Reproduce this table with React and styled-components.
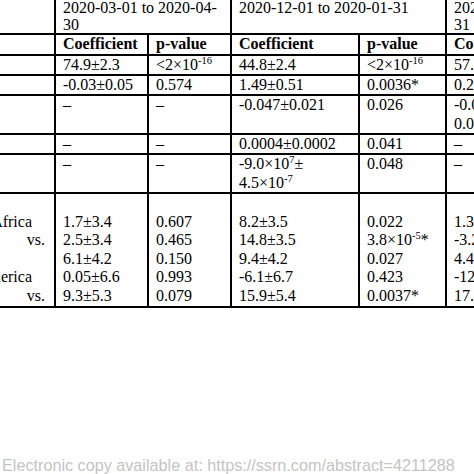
import React from "react";
import styled, { createGlobalStyle } from "styled-components";

const GlobalStyle = createGlobalStyle`
  html, body { margin: 0; padding: 0; background: #fff; overflow: hidden; }
  #root { width: 474px; height: 474px; }
`;

const Page = styled.div`
  width: 474px;
  height: 474px;
  display: flex;
  flex-direction: column;
  overflow: hidden;
  background: #fff;
`;

const TableGrid = styled.div`
  display: grid;
  grid-template-columns: 54px 91px 81px 126px 85px 170px;
  grid-template-rows: 33px 19px 18px 18px 37px 18px 37px 112px;
  gap: 2px;
  padding-bottom: 2px;
  background: #000;
  width: max-content;
  font-family: "Liberation Serif", "Times New Roman", serif;
  color: #000;
`;

const Cell = styled.div`
  background: #fff;
  grid-column: ${(p) => (p.$span ? `span ${p.$span}` : "auto")};
  padding: 0 4px 0 7px;
  font-size: 16px;
  font-weight: ${(p) => (p.$bold ? 700 : 400)};
  line-height: 18.6px;
  white-space: nowrap;
`;

const HeaderCell = styled(Cell)`
  font-size: 16px;
  line-height: 16.5px;
  white-space: normal;
`;

const LabelCell = styled(Cell)`
  padding: 0;
  display: flex;
  flex-direction: column;
  align-items: flex-end;
  overflow: hidden;
`;

const LabelLine = styled.div`
  height: 18.6px;
  padding-right: ${(p) => p.$end}px;
  white-space: nowrap;
`;

const Line = styled.div`
  height: 18.6px;
`;

const Sup = styled.sup`
  font-size: 10.5px;
  line-height: 0;
  vertical-align: 6.5px;
`;

const Footer = styled.div`
  margin-top: auto;
  padding-left: 2px;
  font-family: "Liberation Sans", Arial, sans-serif;
  font-size: 16.2px;
  line-height: 18px;
  color: #c4c4c4;
  white-space: nowrap;
`;

const Lines = ({ items }) => (
  <>
    {items.map((t, i) => (
      <Line key={i}>{t}</Line>
    ))}
  </>
);

const dash = "\u2013";

export default function App() {
  return (
    <Page>
      <GlobalStyle />
      <TableGrid>
        {/* header row */}
        <Cell />
        <HeaderCell $span={2}>
          2020-03-01 to 2020-04-<wbr />30
        </HeaderCell>
        <HeaderCell $span={2}>2020-12-01 to 2020-01-31</HeaderCell>
        <HeaderCell>
          2020-02-01 to 2020-03-<wbr />31
        </HeaderCell>

        {/* column labels */}
        <Cell />
        <Cell $bold>Coefficient</Cell>
        <Cell $bold>p-value</Cell>
        <Cell $bold>Coefficient</Cell>
        <Cell $bold>p-value</Cell>
        <Cell $bold>Coefficient</Cell>

        {/* intercept */}
        <Cell />
        <Cell>74.9±2.3</Cell>
        <Cell>
          &lt;2×10<Sup>-16</Sup>
        </Cell>
        <Cell>44.8±2.4</Cell>
        <Cell>
          &lt;2×10<Sup>-16</Sup>
        </Cell>
        <Cell>57.3±2.6</Cell>

        <Cell />
        <Cell>-0.03±0.05</Cell>
        <Cell>0.574</Cell>
        <Cell>1.49±0.51</Cell>
        <Cell>0.0036*</Cell>
        <Cell>0.25±0.08</Cell>

        <Cell />
        <Cell>{dash}</Cell>
        <Cell>{dash}</Cell>
        <Cell>-0.047±0.021</Cell>
        <Cell>0.026</Cell>
        <Cell>
          <Lines items={["-0.063±", "0.024"]} />
        </Cell>

        <Cell />
        <Cell>{dash}</Cell>
        <Cell>{dash}</Cell>
        <Cell>0.0004±0.0002</Cell>
        <Cell>0.041</Cell>
        <Cell>{dash}</Cell>

        <Cell />
        <Cell>{dash}</Cell>
        <Cell>{dash}</Cell>
        <Cell>
          <Line>
            -9.0×10<Sup>7</Sup>±
          </Line>
          <Line>
            4.5×10<Sup>-7</Sup>
          </Line>
        </Cell>
        <Cell>0.048</Cell>
        <Cell>{dash}</Cell>

        {/* regions */}
        <LabelCell>
          <LabelLine $end={22}> </LabelLine>
          <LabelLine $end={22}>North Africa</LabelLine>
          <LabelLine $end={9}>vs.</LabelLine>
          <LabelLine $end={22}> </LabelLine>
          <LabelLine $end={22}>South America</LabelLine>
          <LabelLine $end={9}>vs.</LabelLine>
        </LabelCell>
        <Cell>
          <Lines items={["", "1.7±3.4", "2.5±3.4", "6.1±4.2", "0.05±6.6", "9.3±5.3"]} />
        </Cell>
        <Cell>
          <Lines items={["", "0.607", "0.465", "0.150", "0.993", "0.079"]} />
        </Cell>
        <Cell>
          <Lines items={["", "8.2±3.5", "14.8±3.5", "9.4±4.2", "-6.1±6.7", "15.9±5.4"]} />
        </Cell>
        <Cell>
          <Line />
          <Line>0.022</Line>
          <Line>
            3.8×10<Sup>-5</Sup>*
          </Line>
          <Line>0.027</Line>
          <Line>0.423</Line>
          <Line>0.0037*</Line>
        </Cell>
        <Cell>
          <Lines items={["", "1.3±3.6", "-3.2±3.6", "4.4±4.4", "-12.3±7.0", "17.4±5.6"]} />
        </Cell>
      </TableGrid>
      <Footer>Electronic copy available at: https://ssrn.com/abstract=4211288</Footer>
    </Page>
  );
}
